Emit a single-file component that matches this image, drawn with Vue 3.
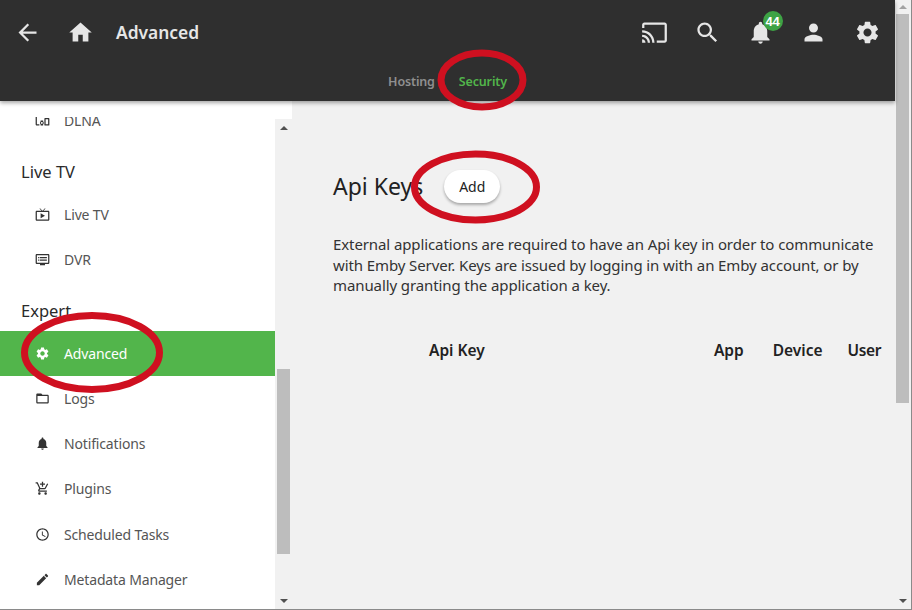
<template>
  <div class="page">
    <div class="main-col">
      <header class="topbar">
        <div class="bar-row">
          <button v-for="ic in leftIcons" :key="ic.name" class="bar-btn" :class="ic.name">
            <svg viewBox="0 0 24 24"><path :d="ic.d" /></svg>
          </button>
          <h1 class="bar-title">Advanced</h1>
          <div class="bar-right">
            <button v-for="ic in rightIcons" :key="ic.name" class="bar-btn" :class="ic.name">
              <svg viewBox="0 0 24 24"><path :d="ic.d" /></svg>
              <span v-if="ic.badge" class="badge">{{ ic.badge }}</span>
            </button>
          </div>
        </div>
        <nav class="tabs">
          <span class="tab">Hosting</span>
          <span class="tab active">Security</span>
        </nav>
      </header>

      <div class="body-row">
        <aside class="drawer">
          <div class="drawer-top"></div>
          <div class="drawer-scroll">
            <div class="nav-list">
              <div class="nav-item">
                <svg viewBox="0 0 24 24"><path :d="icons.dlna" /></svg>
                <span>DLNA</span>
              </div>
              <template v-for="section in sections" :key="section.title">
                <h3 class="nav-heading">{{ section.title }}</h3>
                <div
                  v-for="item in section.items"
                  :key="item.label"
                  class="nav-item"
                  :class="{ selected: item.selected }"
                >
                  <svg viewBox="0 0 24 24"><path :d="item.icon" /></svg>
                  <span>{{ item.label }}</span>
                </div>
              </template>
            </div>
            <div class="scrollbar inner">
              <span class="arrow up"></span>
              <div class="track"><div class="thumb"></div></div>
              <span class="arrow down"></span>
            </div>
          </div>
        </aside>

        <main class="content">
          <div class="title-row">
            <h2>Api Keys</h2>
            <button class="add-btn">Add</button>
          </div>
          <p class="intro">
            External applications are required to have an Api key in order to communicate with Emby Server. Keys are issued by logging in with an Emby account, or by manually granting the application a key.
          </p>
          <div class="table-head">
            <span class="col-key">Api Key</span>
            <span class="col-app">App</span>
            <span class="col-device">Device</span>
            <span class="col-user">User</span>
          </div>
        </main>
      </div>
    </div>

    <div class="scrollbar outer">
      <span class="arrow up"></span>
      <div class="track"><div class="thumb"></div></div>
      <span class="arrow down"></span>
    </div>

    <!-- red marker rings drawn over the screenshot -->
    <svg class="marks" viewBox="0 0 912 610">
      <ellipse cx="482" cy="80" rx="41" ry="27" />
      <ellipse cx="475.500" cy="187" rx="61" ry="33" />
      <ellipse cx="92" cy="352.500" rx="67.500" ry="37" />
    </svg>
  </div>
</template>

<script setup>
const icons = {
  back: 'M20 11H7.83l5.59-5.59L12 4l-8 8 8 8 1.41-1.41L7.83 13H20v-2z',
  home: 'M10 20v-6h4v6h5v-8h3L12 3 2 12h3v8z',
  cast: 'M21 3H3c-1.1 0-2 .9-2 2v3h2V5h18v14h-7v2h7c1.1 0 2-.9 2-2V5c0-1.1-.9-2-2-2zM1 18v3h3c0-1.66-1.34-3-3-3zm0-4v2c2.76 0 5 2.24 5 5h2c0-3.87-3.13-7-7-7zm0-4v2c4.97 0 9 4.03 9 9h2c0-6.08-4.93-11-11-11z',
  search: 'M15.5 14h-.79l-.28-.27C15.41 12.59 16 11.11 16 9.5 16 5.91 13.09 3 9.5 3S3 5.91 3 9.5 5.91 16 9.5 16c1.61 0 3.09-.59 4.23-1.57l.27.28v.79l5 4.99L20.49 19l-4.99-5zm-6 0C7.01 14 5 11.99 5 9.5S7.01 5 9.5 5 14 7.01 14 9.5 11.99 14 9.5 14z',
  bell: 'M12 22c1.1 0 2-.9 2-2h-4c0 1.1.89 2 2 2zm6-6v-5c0-3.07-1.64-5.64-4.5-6.32V4c0-.83-.67-1.5-1.5-1.5s-1.5.67-1.5 1.5v.68C7.63 5.36 6 7.92 6 11v5l-2 2v1h16v-1l-2-2z',
  person: 'M12 12c2.21 0 4-1.79 4-4s-1.79-4-4-4-4 1.79-4 4 1.79 4 4 4zm0 2c-2.67 0-8 1.34-8 4v2h16v-2c0-2.66-5.33-4-8-4z',
  settings: 'M19.14 12.94c.04-.3.06-.61.06-.94 0-.32-.02-.64-.07-.94l2.03-1.58c.18-.14.23-.41.12-.61l-1.92-3.32c-.12-.22-.37-.29-.59-.22l-2.39.96c-.5-.38-1.03-.7-1.62-.94l-.36-2.54c-.04-.24-.24-.41-.48-.41h-3.84c-.24 0-.43.17-.47.41l-.36 2.54c-.59.24-1.13.57-1.62.94l-2.39-.96c-.22-.08-.47 0-.59.22L2.74 8.87c-.12.21-.08.47.12.61l2.03 1.58c-.05.3-.09.63-.09.94s.02.64.07.94l-2.03 1.58c-.18.14-.23.41-.12.61l1.92 3.32c.12.22.37.29.59.22l2.39-.96c.5.38 1.03.7 1.62.94l.36 2.54c.05.24.24.41.48.41h3.84c.24 0 .44-.17.47-.41l.36-2.54c.59-.24 1.13-.56 1.62-.94l2.39.96c.22.08.47 0 .59-.22l1.92-3.32c.12-.22.07-.47-.12-.61l-2.01-1.58zM12 15.6c-1.98 0-3.6-1.62-3.6-3.6s1.62-3.6 3.6-3.6 3.6 1.62 3.6 3.6-1.62 3.6-3.6 3.6z',
  dlna: 'M3 6h18V4H3c-1.1 0-2 .9-2 2v12c0 1.1.9 2 2 2h4v-2H3V6zm10 6H9v1.78c-.61.55-1 1.33-1 2.22s.39 1.67 1 2.22V20h4v-1.78c.61-.55 1-1.34 1-2.22s-.39-1.67-1-2.22V12zm-2 5.5c-.83 0-1.5-.67-1.5-1.5s.67-1.5 1.5-1.5 1.5.67 1.5 1.5-.67 1.5-1.5 1.5zM22 8h-6c-.5 0-1 .5-1 1v10c0 .5.5 1 1 1h6c.5 0 1-.5 1-1V9c0-.5-.5-1-1-1zm-1 10h-4v-8h4v8z',
  livetv: 'M21 6h-7.59l3.29-3.29L16 2l-4 4-4-4-.71.71L10.59 6H3c-1.1 0-2 .89-2 2v12c0 1.1.9 2 2 2h18c1.1 0 2-.9 2-2V8c0-1.11-.9-2-2-2zm0 14H3V8h18v12zM9 10v8l7-4z',
  dvr: 'M21 3H3c-1.1 0-2 .9-2 2v12c0 1.1.9 2 2 2h5v2h8v-2h5c1.1 0 1.99-.9 1.99-2L23 5c0-1.1-.9-2-2-2zm0 14H3V5h18v12zm-2-9H8v2h11V8zm0 4H8v2h11v-2zM7 8H5v2h2V8zm0 4H5v2h2v-2z',
  folder: 'M20 6h-8l-2-2H4c-1.1 0-1.99.9-1.99 2L2 18c0 1.1.9 2 2 2h16c1.1 0 2-.9 2-2V8c0-1.1-.9-2-2-2zm0 12H4V8h16v10z',
  cart: 'M11 9h2V6h3V4h-3V1h-2v3H8v2h3v3zm-4 9c-1.1 0-1.99.9-1.99 2S5.9 22 7 22s2-.9 2-2-.9-2-2-2zm10 0c-1.1 0-1.99.9-1.99 2s.89 2 1.99 2 2-.9 2-2-.9-2-2-2zm-9.83-3.25l.03-.12.9-1.63h7.45c.75 0 1.41-.41 1.75-1.03l3.86-7.01L19.42 4h-.01l-1.1 2-2.76 5H8.53l-.13-.27L6.16 6l-.95-2-.94-2H1v2h2l3.6 7.59-1.35 2.45c-.16.28-.25.61-.25.96 0 1.1.9 2 2 2h12v-2H7.42c-.13 0-.25-.11-.25-.25z',
  clock: 'M11.99 2C6.47 2 2 6.48 2 12s4.47 10 9.99 10C17.52 22 22 17.52 22 12S17.52 2 11.99 2zM12 20c-4.42 0-8-3.58-8-8s3.58-8 8-8 8 3.58 8 8-3.58 8-8 8zm.5-13H11v6l5.25 3.15.75-1.23-4.5-2.67z',
  edit: 'M3 17.25V21h3.75L17.81 9.94l-3.75-3.75L3 17.25zM20.71 7.04c.39-.39.39-1.02 0-1.41l-2.34-2.34c-.39-.39-1.02-.39-1.41 0l-1.83 1.83 3.75 3.75 1.83-1.83z'
}

const leftIcons = [
  { name: 'back', d: icons.back },
  { name: 'home', d: icons.home }
]

const rightIcons = [
  { name: 'cast', d: icons.cast },
  { name: 'search', d: icons.search },
  { name: 'bell', d: icons.bell, badge: 44 },
  { name: 'person', d: icons.person },
  { name: 'settings', d: icons.settings }
]

const sections = [
  {
    title: 'Live TV',
    items: [
      { label: 'Live TV', icon: icons.livetv },
      { label: 'DVR', icon: icons.dvr }
    ]
  },
  {
    title: 'Expert',
    items: [
      { label: 'Advanced', icon: icons.settings, selected: true },
      { label: 'Logs', icon: icons.folder },
      { label: 'Notifications', icon: icons.bell },
      { label: 'Plugins', icon: icons.cart },
      { label: 'Scheduled Tasks', icon: icons.clock },
      { label: 'Metadata Manager', icon: icons.edit }
    ]
  }
]
</script>

<style>
html,
body {
  margin: 0;
  overflow: hidden;
}
</style>

<style scoped>
.page {
  position: relative;
  display: flex;
  width: 912px;
  height: 610px;
  overflow: hidden;
  font-family: "Noto Sans", "Open Sans", sans-serif;
  background: #f1f1f1;
  color: #222;
  border-right: 1px solid #8a8a8a;
  border-bottom: 1px solid #8a8a8a;
  box-sizing: border-box;
}

.main-col {
  flex: 1;
  min-width: 0;
  display: flex;
  flex-direction: column;
}

/* top bar */
.topbar {
  height: 101px;
  flex-shrink: 0;
  background: #2f2f2f;
  box-shadow: 0 2px 4px rgba(0, 0, 0, 0.35);
  position: relative;
  z-index: 2;
}

.bar-row {
  display: flex;
  align-items: center;
  height: 64px;
  padding-left: 5px;
}

.bar-btn {
  position: relative;
  width: 44px;
  height: 44px;
  padding: 0;
  border: 0;
  background: none;
  color: #e6e6e6;
  display: flex;
  align-items: center;
  justify-content: center;
}

.bar-btn svg {
  width: 27px;
  height: 27px;
  flex-shrink: 0;
  fill: currentColor;
}

.bar-btn.home {
  margin-left: 9px;
}

.bar-title {
  margin: 0 0 0 14px;
  font-size: 17.400px;
  font-weight: 600;
  color: #e6e6e6;
}

.bar-right {
  margin-left: auto;
  display: flex;
  gap: 9.200px;
  padding-right: 6px;
}

.badge {
  position: absolute;
  top: 1px;
  left: 24px;
  width: 20px;
  height: 20px;
  border-radius: 50%;
  background: #3ea345;
  color: #fff;
  font-size: 13px;
  font-weight: 600;
  display: flex;
  align-items: center;
  justify-content: center;
}

.tabs {
  display: flex;
  justify-content: center;
  gap: 24px;
  padding-top: 9px;
  font-size: 12.500px;
  letter-spacing: -0.15px;
  font-weight: 600;
  color: #8f8f8f;
}

.tab.active {
  color: #52b54b;
}

/* drawer */
.body-row {
  flex: 1;
  min-height: 0;
  display: flex;
}

.drawer {
  width: 292px;
  flex-shrink: 0;
  background: #fff;
  display: flex;
  flex-direction: column;
}

.drawer-top {
  height: 16px;
  flex-shrink: 0;
  background: #fff;
  position: relative;
  z-index: 1;
}

.drawer-scroll {
  flex: 1;
  min-height: 0;
  display: flex;
  overflow: hidden;
}

.nav-list {
  flex: 1;
  min-width: 0;
  margin-top: -19px;
}

.nav-heading {
  margin: 0;
  height: 33.600px;
  padding: 15px 0 0 21px;
  font-size: 16.500px;
  font-weight: 400;
  line-height: 27px;
  color: #2a2a2a;
}

.nav-item {
  display: flex;
  align-items: center;
  height: 45.200px;
  padding-left: 35px;
  font-size: 14px;
  letter-spacing: -0.15px;
  color: #555;
}

.nav-item svg {
  width: 15px;
  height: 15px;
  margin-right: 14px;
  fill: #333;
}

.nav-item.selected {
  background: #52b54b;
  color: #fff;
}

.nav-item.selected svg {
  fill: #fff;
}

/* scrollbars */
.scrollbar {
  width: 17px;
  flex-shrink: 0;
  display: flex;
  flex-direction: column;
  background: #f1f1f1;
}

.arrow {
  height: 17px;
  flex-shrink: 0;
  display: flex;
  align-items: center;
  justify-content: center;
}

.arrow::before {
  content: '';
  border-left: 4px solid transparent;
  border-right: 4px solid transparent;
}

.arrow.up::before {
  border-bottom: 4px solid #505050;
}

.arrow.down::before {
  border-top: 4px solid #505050;
}

.track {
  flex: 1;
  min-height: 0;
  display: flex;
  flex-direction: column;
  padding: 0 2px;
}

.thumb {
  background: #bdbdbd;
}

.inner {
  margin-top: 2px;
}

.inner .track {
  padding-top: 233px;
}

.inner .thumb {
  height: 185px;
}

.outer {
  width: 16px;
}

.outer .arrow.up {
  height: 14px;
}

.outer .arrow.up::before {
  border-bottom-color: #a3a3a3;
}

.outer .track {
  padding: 0 2px 0 1px;
}

.outer .thumb {
  height: 389px;
}

/* content */
.content {
  flex: 1;
  min-width: 0;
  padding: 0 14px 0 41px;
}

.title-row {
  display: flex;
  align-items: center;
  gap: 21px;
  margin-top: 67px;
  height: 36px;
}

.title-row h2 {
  margin: 0;
  font-size: 23px;
  font-weight: 400;
  color: #222;
}

.add-btn {
  width: 56px;
  height: 33px;
  border: 0;
  border-radius: 17px;
  background: #fff;
  font: inherit;
  font-size: 14px;
  color: #222;
  box-shadow: 0 2px 3px rgba(0, 0, 0, 0.3);
}

.intro {
  margin: 30px 0 0;
  font-size: 15px;
  letter-spacing: -0.1px;
  line-height: 20.700px;
  color: #333;
}

.table-head {
  display: flex;
  margin-top: 43px;
  font-size: 15.500px;
  font-weight: 600;
  color: #222;
}

.col-key {
  margin-left: 96px;
}

.col-app {
  margin-left: auto;
}

.col-device {
  margin-left: 29px;
}

.col-user {
  margin-left: 25px;
  letter-spacing: -0.4px;
}

/* red rings */
.marks {
  position: absolute;
  left: 0;
  top: 0;
  width: 912px;
  height: 610px;
  fill: none;
  stroke: #cf1020;
  stroke-width: 7;
  z-index: 5;
  pointer-events: none;
}
</style>
